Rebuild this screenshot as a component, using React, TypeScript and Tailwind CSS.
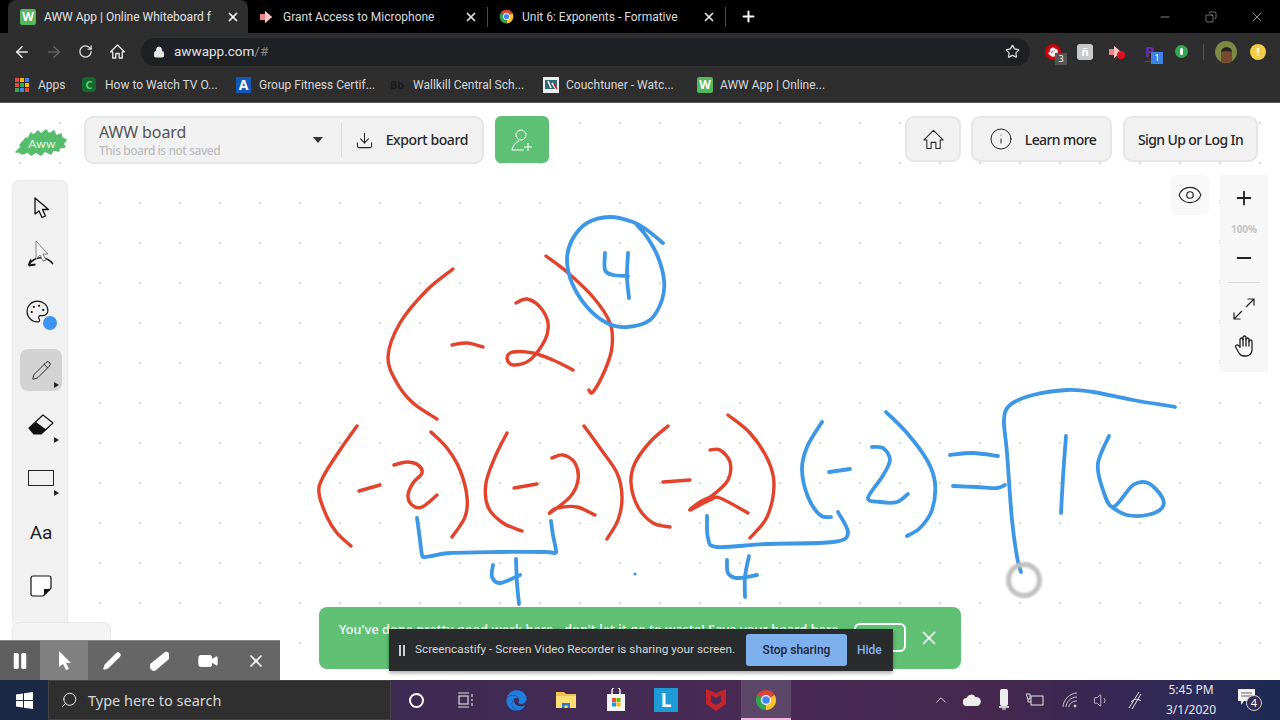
import React from "react";
import { ArrowLeft, ArrowRight, RotateCw, Lock, Star, X, Plus, Minus, Download, Info, Eye, Pencil, Search, ChevronUp, Volume1, Video, Pause, Palette, Copy, Hand } from "lucide-react";
import { TbHandStop } from "react-icons/tb";
import { FaEdge } from "react-icons/fa";

const RED = "#e2432a";
const BLUE = "#3c97e6";
type P = number[];
const redStrokes: P[] = [
  [453,269,427,290,400,323,388,357,397,383,413,403,437,419],
  [546,256,567,272,593,297,610,323,612,347,605,370,593,392,589,390],
  [452,345,467,343,483,347],
  [516,303,527,299,540,307,548,323,545,340,530,360,513,365,507,358,513,352,533,353,553,360,573,370],
  [357,426,340,450,323,477,319,493,327,517,337,533,351,546],
  [359,491,380,485],
  [394,465,407,462,418,465,422,473,413,483,408,495,412,505,422,507,437,495],
  [431,432,447,448,460,470,467,497,465,517,452,537],
  [507,433,495,457,486,483,488,507,503,523,522,531],
  [514,488,537,484],
  [552,458,563,455,575,463,578,480,570,497,550,513,557,508,577,507,595,515],
  [584,426,600,448,617,473,622,497,618,520,607,539],
  [668,426,650,442,635,463,631,483,638,507,653,523,670,527],
  [663,482,690,480],
  [710,450,720,450,730,462,728,480,713,495,700,502,690,510,710,500,720,498,748,513],
  [728,415,750,433,768,460,774,485,767,517,750,538],
];
const blueStrokes: P[] = [
  [663,243,647,230,633,222,610,217,587,223,572,240,567,260,572,283,587,307,607,323,627,327,650,320,662,300,664,280,658,257,647,237,637,225],
  [605,253,605,270,613,275,628,276],
  [628,253,627,277,629,298],
  [417,518,420,540,422,555,424,557,432,556,450,553,500,552,545,552,555,553,556,550,553,535,551,521],
  [493,565,492,577,500,583,520,575],
  [516,559,517,583,519,604],
  [707,516,708,538,717,547,767,544,833,542,848,533,838,512],
  [727,560,728,573,737,578,757,575],
  [749,556,745,577,745,597],
  [822,422,807,447,802,470,808,497,820,515,831,517],
  [829,472,850,469],
  [872,447,883,448,890,460,882,477,868,498,880,502,897,502,908,494],
  [886,412,907,433,927,460,935,483,932,510,920,528,907,536],
  [950,455,973,453,998,456],
  [953,486,977,487,997,488,1005,485],
  [1175,407,1133,400,1093,392,1067,390,1033,395,1010,405,1004,420,1007,453,1012,520,1017,557,1021,572],
  [1066,436,1063,477,1061,513],
  [1109,436,1098,463,1102,487,1113,507,1133,485,1148,483,1162,497,1162,508,1147,515,1127,515,1113,508],
];
function smooth(p: P) {
  const n = p.length / 2;
  const at = (i: number) => {
    const k = Math.max(0, Math.min(n - 1, i));
    return [p[k * 2], p[k * 2 + 1]];
  };
  let d = `M${p[0]} ${p[1]}`;
  for (let i = 0; i < n - 1; i++) {
    const [x0, y0] = at(i - 1), [x1, y1] = at(i), [x2, y2] = at(i + 1), [x3, y3] = at(i + 2);
    d += `C${(x1 + (x2 - x0) / 6).toFixed(1)} ${(y1 + (y2 - y0) / 6).toFixed(1)} ${(x2 - (x3 - x1) / 6).toFixed(1)} ${(y2 - (y3 - y1) / 6).toFixed(1)} ${x2} ${y2}`;
  }
  return d;
}

function Drawing() {
  return (
    <svg className="absolute left-0 top-0 pointer-events-none" width="1280" height="577" viewBox="0 103 1280 577" fill="none" strokeLinecap="round" strokeLinejoin="round">
      {redStrokes.map((s, i) => <path key={i} d={smooth(s)} stroke={RED} strokeWidth="3.4" />)}
      {blueStrokes.map((s, i) => <path key={i} d={smooth(s)} stroke={BLUE} strokeWidth="3.8" />)}
      <circle cx="635" cy="574" r="1.6" fill={BLUE} />
    </svg>
  );
}

function WFav() {
  return <span className="w-4 h-4 rounded-[2px] bg-[#55b85c] text-white text-[12px] font-bold leading-4 text-center shrink-0">W</span>;
}
function ArrowFav({ dot }: { dot?: boolean }) {
  return (
    <svg width="18" height="16" viewBox="0 0 18 16">
      <path d="M1 5h5V2l7 6-7 6v-3H1z" fill="#f0828a" />
      <path d="M6 2l7 6-7 6z" fill="#ffc7c7" />
      {dot && <circle cx="13" cy="11" r="4" fill="#e01020" />}
    </svg>
  );
}
function ChromeIcon({ s = 24 }: { s?: number }) {
  return (
    <svg width={s} height={s} viewBox="0 0 24 24">
      <path d="M12 12L2.500 6.500A11 11 0 0 1 21.500 6.500Z" fill="#dc4437" />
      <path d="M12 12L21.500 6.500A11 11 0 0 1 12 23Z" fill="#fbc02d" />
      <path d="M12 12L12 23A11 11 0 0 1 2.500 6.500Z" fill="#31a652" />
      <circle cx="12" cy="12" r="5.500" fill="#fff" />
      <circle cx="12" cy="12" r="4.200" fill="#4285f4" />
    </svg>
  );
}

function Tab({ w, gap, icon, title, divider }: { w: string; gap: string; icon: React.ReactNode; title: string; divider?: boolean }) {
  return (
    <div className={`${w} h-[33px] flex items-center shrink-0 relative`}>
      <span className={`${gap} ml-[11px] flex items-center`}>{icon}</span>
      <span className="flex-1 text-[12px] text-[#dcdcdc] whitespace-nowrap overflow-hidden font-['Roboto',sans-serif]">{title}</span>
      <X size={14} strokeWidth={3} className="text-[#e4e4e4] mr-[9px] ml-[6px] shrink-0" />
      {divider && <span className="w-px h-[20px] bg-[#4a4a4a]" />}
    </div>
  );
}

function TabStrip() {
  return (
    <div className="h-[33px] bg-black flex items-center shrink-0 pl-[8px]">
      <div className="w-[240px] h-[33px] bg-[#2e2e2e] rounded-t-[8px] flex items-center pl-[12px] pr-[8px] shrink-0">
        <WFav />
        <span className="ml-[8px] flex-1 text-[12px] text-[#e2e2e2] whitespace-nowrap font-['Roboto',sans-serif]">AWW App | Online Whiteboard f</span>
        <X size={14} strokeWidth={3} className="text-white ml-[4px] shrink-0" />
      </div>
      <Tab w="w-[240px]" gap="w-[24px]" icon={<ArrowFav />} title="Grant Access to Microphone" divider />
      <Tab w="w-[238px]" gap="w-[23px]" icon={<ChromeIcon s={15} />} title="Unit 6: Exponents - Formative" divider />
      <Plus size={17} strokeWidth={2.800} className="text-white ml-[14px]" />
      <div className="flex-1" />
      <Minus size={14} strokeWidth={1} className="text-[#ddd] mr-[33px]" />
      <Copy size={12} strokeWidth={1} className="text-[#ddd] mr-[32px] -scale-x-100" />
      <X size={16} strokeWidth={1} className="text-[#ddd] mr-[15px]" />
    </div>
  );
}

function HouseIcon({ size, stroke, width }: { size: number; stroke: string; width: number }) {
  return (
    <svg width={size} height={size} viewBox="0 0 22 22" fill="none" stroke={stroke} strokeWidth={width} strokeLinejoin="round">
      <path d="M11 1.500 L1 11.500 L4 11.500 L4 20.500 L8.500 20.500 L8.500 14 L13.500 14 L13.500 20.500 L18 20.500 L18 11.500 L21 11.500 Z" />
    </svg>
  );
}

function Toolbar() {
  return (
    <div className="h-[37px] bg-[#2e2e2e] flex items-center shrink-0">
      <ArrowLeft size={18} strokeWidth={2} className="text-[#e6e6e6] ml-[13px]" />
      <ArrowRight size={18} strokeWidth={2} className="text-[#666] ml-[14px]" />
      <RotateCw size={15} strokeWidth={2} className="text-[#e6e6e6] ml-[15px]" />
      <span className="ml-[17px] flex"><HouseIcon size={15} stroke="#e6e6e6" width={2} /></span>
      <div className="ml-[16px] w-[889px] h-[28px] rounded-full bg-[#1f2023] flex items-center pl-[12px] pr-[10px]">
        <Lock size={12} fill="#e6e6e6" strokeWidth={2} className="text-[#e6e6e6]" />
        <span className="ml-[9px] text-[13.500px] text-[#e2e2e2] font-['Roboto',sans-serif]">awwapp.com<span className="text-[#888]">/#</span></span>
        <div className="flex-1" />
        <Star size={15} strokeWidth={2} className="text-[#dcdcdc]" />
      </div>
      <div className="relative ml-[15px] w-[16px] h-[16px] rounded-full bg-[#c8101a] border-2 border-[#c00] flex items-center justify-center">
        <Hand size={10} fill="#fff" className="text-white" />
        <span className="absolute left-[8px] top-[7px] w-[12px] h-[12px] bg-[#555] text-white text-[9px] leading-3 text-center">3</span>
      </div>
      <div className="ml-[16px] w-[16px] h-[16px] rounded-[3px] bg-[#c9c9c9] text-white text-[11px] font-bold leading-4 text-center">ñ</div>
      <div className="ml-[15px] flex"><ArrowFav dot /></div>
      <div className="relative ml-[19px] w-[16px] h-[17px] text-[#6b2ea8] text-[15px] font-bold leading-4">
        <span className="border-b border-[#6b2ea8]">P</span>
        <span className="absolute left-[6px] top-[9px] w-[12px] h-[12px] bg-[#3d83e6] text-white text-[9px] leading-3 text-center font-normal">1</span>
      </div>
      <div className="ml-[14px] w-[13px] h-[13px] rounded-full bg-[#35a853] flex items-center justify-center"><span className="w-[3px] h-[7px] bg-white rounded-full" /></div>
      <span className="ml-[15px] w-px h-[16px] bg-[#555]" />
      <div className="ml-[11px] w-[22px] h-[22px] rounded-full bg-[#7d8a45] flex items-end justify-center overflow-hidden">
        <span className="w-[11px] h-[16px] rounded-t-full bg-[#7a4a30] border-t-[4px] border-[#222]" />
      </div>
      <div className="ml-[13px] w-[16px] h-[16px] rounded-full bg-[#f4cd47] text-white text-[11px] font-bold leading-4 text-center">!</div>
    </div>
  );
}

function Bookmark({ w, icon, text }: { w: string; icon: React.ReactNode; text: string }) {
  return (
    <div className={`${w} flex items-center shrink-0`}>
      <span className="w-[23px] flex items-center">{icon}</span>
      <span className="text-[12px] text-[#d8d8d8] whitespace-nowrap font-['Roboto',sans-serif]">{text}</span>
    </div>
  );
}

function Bookmarks() {
  const colors = ["#e8453c","#f4b400","#4285f4","#e8453c","#34a853","#f4b400","#34a853","#4285f4","#e8453c"];
  return (
    <div className="h-[33px] bg-[#2e2e2e] border-b border-[#555] flex items-center pl-[15px] pb-[3px] shrink-0">
      <Bookmark w="w-[67px]" text="Apps" icon={
        <span className="grid grid-cols-3 gap-[1px] w-[14px]">{colors.map((c, i) => <span key={i} className="w-[4px] h-[4px]" style={{ background: c }} />)}</span>
      } />
      <Bookmark w="w-[154px]" text="How to Watch TV O..." icon={
        <span className="w-[14px] h-[15px] bg-[#14692f] text-[#5fd06f] text-[11px] font-bold leading-[15px] text-center rounded-[4px]">C</span>
      } />
      <Bookmark w="w-[154px]" text="Group Fitness Certif..." icon={
        <span className="w-[15px] h-[16px] bg-[#1258b8] text-white text-[14px] font-bold leading-4 text-center">A</span>
      } />
      <Bookmark w="w-[153px]" text="Wallkill Central Sch..." icon={
        <span className="text-[11px] font-bold text-[#1b1b1b] leading-4">Bb</span>
      } />
      <Bookmark w="w-[154px]" text="Couchtuner - Watc..." icon={
        <svg width="16" height="16" viewBox="0 0 16 16"><rect width="16" height="16" fill="#eee" /><rect x="2" y="3" width="12" height="9" fill="#2c6a74" /><path d="M5 4l3 7M9 6l4 6" stroke="#fff" strokeWidth="1.500" /><path d="M11 7l3 5" stroke="#c02a2a" strokeWidth="1.500" /></svg>
      } />
      <Bookmark w="w-[140px]" text="AWW App | Online..." icon={<WFav />} />
    </div>
  );
}

function Logo() {
  return (
    <svg width="52" height="32" viewBox="0 0 52 32" className="shrink-0">
      <path d="M1 26 L7 20 L5 19 L11 12 L13 13 L16 7 L19 9 L23 5 L26 8 L31 4 L34 8 L39 5 L41 10 L46 8 L47 12 L51 14 L48 18 L50 21 L44 22 L44 25 L38 24 L36 28 L30 25 L26 29 L21 26 L16 29 L13 26 L7 28 L4 26 Z" fill="#55bd6b" stroke="#55bd6b" strokeWidth="1.500" strokeLinejoin="round" />
      <text x="27" y="21.500" textAnchor="middle" fill="#e9f7ec" fontSize="12" fontFamily="Lato, sans-serif" letterSpacing="0.3">Aww</text>
    </svg>
  );
}

function TopBar() {
  const btn = "h-[46px] bg-[#f1f1f1] border-2 border-[#e6e6e6] rounded-[9px] flex items-center justify-center text-[14px] font-medium text-[#262626] tracking-[-0.6px]";
  return (
    <div className="h-[77px] pt-[13px] pl-[15px] pr-[22px] flex items-start shrink-0">
      <div className="mt-[10px]"><Logo /></div>
      <div className="ml-[17px] w-[400px] h-[48px] bg-[#f1f1f1] border-2 border-[#e6e6e6] rounded-[9px] flex items-center pl-[13px]">
        <div className="flex-1 flex flex-col">
          <span className="text-[16px] leading-[20px] text-[#555] tracking-[-0.1px]">AWW board</span>
          <span className="text-[12px] leading-[17px] text-[#bdbdbd] font-medium tracking-[-0.45px]">This board is not saved</span>
        </div>
        <span className="w-0 h-0 border-l-[5px] border-r-[5px] border-t-[6px] border-l-transparent border-r-transparent border-t-[#333] mr-[18px]" />
        <span className="w-px h-[34px] bg-[#dcdcdc]" />
        <Download size={19} strokeWidth={1.300} className="ml-[13px] text-[#222]" />
        <span className="ml-[12px] mr-[14px] mb-[2px] text-[14px] font-medium text-[#262626] whitespace-nowrap tracking-[-0.4px]">Export board</span>
      </div>
      <div className="ml-[11px] w-[54px] h-[47px] bg-[#5dc074] rounded-[6px] flex items-center justify-center">
        <svg width="24" height="24" viewBox="0 0 24 24" fill="none" stroke="#fff" strokeWidth="1">
          <circle cx="11" cy="7" r="5" />
          <path d="M2 22c1-5 4-8 7-9M2 22h12M18 15v8M14 19h8" />
        </svg>
      </div>
      <div className="flex-1" />
      <div className={`${btn} w-[56px]`}><HouseIcon size={21} stroke="#222" width={1.100} /></div>
      <div className={`${btn} w-[141px] ml-[10px] pl-[2px]`}>
        <Info size={24} strokeWidth={1} className="text-[#222] mr-[12px]" />Learn more
      </div>
      <div className={`${btn} w-[135px] ml-[11px]`}>Sign Up or Log In</div>
    </div>
  );
}

function Caret() {
  return <span className="absolute right-[3px] bottom-[3px] w-0 h-0 border-t-[3px] border-b-[3px] border-l-[5px] border-t-transparent border-b-transparent border-l-[#222]" />;
}

function LeftTools() {
  const item = "relative w-[42px] h-[42px] flex items-center justify-center shrink-0";
  return (
    <div className="flex flex-col items-start">
      <div className="w-[56px] h-[443px] bg-[#f1f1f1] border-x border-t border-[#e8e8e8] rounded-t-[8px] pt-[6px] pl-[2px] flex flex-col items-center">
        <div className={item}>
          <svg className="translate-x-[1px]" width="18" height="22" viewBox="0 0 18 22" fill="none" stroke="#111" strokeWidth="1.300" strokeLinejoin="round"><path d="M2 1v16l4-3 3 6.500 3.500-1.500-3-6.500h6z" /></svg>
        </div>
        <div className={`${item} mt-[6px]`}>
          <svg width="28" height="30" viewBox="0 0 28 30" fill="none" stroke="#111" strokeWidth="1.300">
            <path d="M2 24 C7 15 19 14 26 23" />
            <path d="M1.500 24.500l7-1M1.500 24.500l2.500-6" strokeWidth="1.800" />
            <path d="M9 0v18l4-4 3 6 3-1-3-6h5z" fill="#f4f4f4" stroke="#777" strokeWidth="0.900" strokeLinejoin="round" />
          </svg>
        </div>
        <div className={`${item} mt-[15px]`}>
          <Palette size={25} strokeWidth={1.100} className="text-[#111] -translate-x-[4px] -translate-y-[2px]" />
          <span className="absolute left-[23px] top-[24px] w-[14px] h-[14px] rounded-full bg-[#3c94f0]" />
        </div>
        <div className={`${item} mt-[15px] bg-[#d3d3d3] rounded-[8px]`}>
          <Pencil size={21} strokeWidth={1} className="text-[#111]" />
          <Caret />
        </div>
        <div className={`${item} mt-[13px]`}>
          <svg width="26" height="24" viewBox="0 0 26 24"><path d="M1 15 L15 2 L25 10 L13 21 H6z" fill="none" stroke="#111" strokeWidth="1.200" strokeLinejoin="round" /><path d="M1 15 L8 9 L18 16.500 L13 21 H6z" fill="#111" /></svg>
          <Caret />
        </div>
        <div className={`${item} mt-[11px]`}>
          <span className="w-[26px] h-[16px] border border-[#222]" />
          <Caret />
        </div>
        <div className={`${item} mt-[13px] text-[19px] text-[#222] font-['Roboto',sans-serif]`}>Aa</div>
        <div className={`${item} mt-[11px]`}>
          <svg width="22" height="22" viewBox="0 0 22 22"><path d="M13 21H3a2 2 0 0 1-2-2V3a2 2 0 0 1 2-2h16a2 2 0 0 1 2 2v10z" fill="#fff" stroke="#111" strokeWidth="1.200" /><path d="M21 14l-7 7v-7z" fill="#111" /></svg>
        </div>
      </div>
      <div className="w-[99px] h-[30px] -mt-[1px] bg-[#f4f4f4] border border-[#e8e8e8] rounded-t-[8px]" />
    </div>
  );
}

function RightTools() {
  return (
    <div className="flex items-start -mt-[5px]">
      <div className="w-[39px] h-[40px] bg-[#f8f8f8] rounded-[6px] flex items-center justify-center">
        <Eye size={26} strokeWidth={1.100} className="text-[#222]" />
      </div>
      <div className="ml-[11px] w-[48px] h-[197px] bg-[#f7f7f7] flex flex-col items-center pt-[12px]">
        <Plus size={22} strokeWidth={2} className="text-[#222]" />
        <span className="mt-[13px] text-[10px] leading-[14px] font-bold text-[#c4c4c4]">100%</span>
        <Minus size={22} strokeWidth={2} className="mt-[11px] text-[#222]" />
        <span className="mt-[13px] w-[32px] h-px bg-[#dadada]" />
        <svg className="mt-[14px]" width="24" height="24" viewBox="0 0 24 24" fill="none" stroke="#222" strokeWidth="1.200">
          <path d="M14 10l8-8M15.500 2H22v6.500M10 14l-8 8M2 15.500V22h6.500" />
        </svg>
        <TbHandStop size={24} strokeWidth={1.300} className="mt-[13px] text-[#222]" />
      </div>
    </div>
  );
}

function Banner() {
  return (
    <div className="absolute left-[319px] top-[504px] w-[642px] h-[62px] bg-[#60c174] rounded-[8px] flex items-start pl-[20px] pt-[14px] text-white">
      <span className="text-[12.500px] font-medium whitespace-nowrap tracking-[0.14px]">You've done pretty good work here - don't let it go to waste! Save your board here</span>
      <span className="absolute left-[535px] top-[16px] w-[52px] h-[29px] border-2 border-white rounded-[6px]" />
      <X size={22} strokeWidth={1.800} className="absolute left-[599px] top-[20px]" />
    </div>
  );
}

function SharingBar() {
  return (
    <div className="absolute left-[389px] top-[526px] w-[504px] h-[42px] bg-[#292b2d] shadow-[0_2px_4px_rgba(0,0,0,0.35)] flex items-center pl-[10px] text-[12px] text-[#d6d8da] font-['Roboto',sans-serif]">
      <span className="w-[2px] h-[11px] bg-[#cfcfcf]" />
      <span className="w-[2px] h-[11px] bg-[#cfcfcf] ml-[2px]" />
      <span className="ml-[10px] whitespace-nowrap text-[11.800px]">Screencastify - Screen Video Recorder is sharing your screen.</span>
      <span className="absolute left-[357px] top-[5px] w-[101px] h-[32px] bg-[#7fb0ee] rounded-[3px] text-[#1d2530] font-medium flex items-center justify-center">Stop sharing</span>
      <span className="absolute left-[468px] top-[5px] h-[32px] flex items-center text-[#86b3ef] font-medium">Hide</span>
    </div>
  );
}

function RecorderPanel() {
  const cell = "w-[48px] h-[40px] flex items-center justify-center";
  return (
    <div className="absolute left-0 top-[537px] w-[280px] h-[40px] bg-[#666] border-t border-[#888] flex text-white">
      <div className="w-[40px] h-[40px] bg-[#5f5f5f] flex items-center justify-center"><Pause size={20} fill="#fff" strokeWidth={1} /></div>
      <div className={`${cell} bg-[#808080]`}>
        <svg width="14" height="20" viewBox="0 0 14 20" fill="#fff"><path d="M2 0v16l4-3 3 6 3-1-3-6h5z" /></svg>
      </div>
      <div className={cell}><Pencil size={20} fill="#fff" strokeWidth={1} /></div>
      <div className={cell}>
        <svg width="22" height="22" viewBox="0 0 22 22" fill="#fff"><path d="M1 14 L16 2 Q20 1 20 5 L20 9 L6 21 Q2 21 1 18z" /></svg>
      </div>
      <div className={cell}><Video size={22} fill="#fff" strokeWidth={1} /></div>
      <div className={cell}><X size={20} strokeWidth={2} /></div>
    </div>
  );
}

function Canvas() {
  return (
    <div className="relative h-[577px] bg-white overflow-hidden shrink-0 bg-[radial-gradient(circle,#d6d6d6_1px,transparent_1.500px)] bg-[length:40px_40px] flex flex-col">
      <Drawing />
      <div className="absolute left-[1006px] top-[459px] w-[36px] h-[36px] rounded-full border-[5px] border-[#c0c0c0] blur-[1px]" />
      <div className="relative flex flex-col flex-1">
        <TopBar />
        <div className="px-[12px] flex justify-between items-start">
          <LeftTools />
          <RightTools />
        </div>
      </div>
      <Banner />
      <SharingBar />
      <RecorderPanel />
    </div>
  );
}

function Taskbar() {
  const slot = "w-[50px] h-[40px] flex items-center justify-center shrink-0";
  return (
    <div className="h-[40px] bg-[linear-gradient(90deg,#3c2a54_0%,#3d2a52_30%,#4a2a55_60%,#45274f_78%,#2b2a58_94%,#1c2a52_100%)] flex items-center shrink-0">
      <div className="w-[48px] h-[40px] bg-[#1a2844] flex items-center justify-center">
        <svg width="17" height="17" viewBox="0 0 17 17" fill="#fff"><path d="M0 2.500l7-1v6.500H0zM8 1.300l9-1.300v8H8zM0 9h7v6.500l-7-1zM8 9h9v8l-9-1.300z" /></svg>
      </div>
      <div className="w-[343px] h-[40px] bg-[#2f2f2f] border border-[#444] flex items-center pl-[11px]">
        <Search size={18} strokeWidth={1.300} className="text-[#eee] -scale-x-100" />
        <span className="ml-[10px] text-[14.500px] text-[#d8d8d8] mt-[2px]">Type here to search</span>
      </div>
      <div className="w-[1px]" />
      <div className={`${slot} -ml-[1px]`}><span className="w-[15px] h-[15px] rounded-full border-2 border-white" /></div>
      <div className={slot}>
        <svg width="18" height="16" viewBox="0 0 18 16" fill="none" stroke="#ddd" strokeWidth="1.200"><path d="M1 1h11M1 15h11" /><rect x="2" y="4" width="9" height="8" /><path d="M15 2v3M15 7v2M15 11v3" /></svg>
      </div>
      <div className={slot}><FaEdge size={21} className="text-[#1d7fe0]" /></div>
      <div className={slot}>
        <svg width="22" height="20" viewBox="0 0 22 20"><path d="M1 2h8l2 2h10v14H1z" fill="#f4c24e" /><path d="M1 6h20v12H1z" fill="#ffdd77" /><path d="M7 18v-5h8v5h-2.500v-2.500h-3V18z" fill="#2a7cc7" /></svg>
      </div>
      <div className={slot}>
        <svg width="20" height="24" viewBox="0 0 20 24"><path d="M1 6h18v17H1z" fill="#f4f4f4" /><path d="M6 6V3a4 4 0 0 1 8 0v3" fill="none" stroke="#eee" strokeWidth="1.500" /><rect x="6" y="10" width="4" height="4" fill="#e8532b" /><rect x="10.500" y="10" width="4" height="4" fill="#7ab800" /><rect x="6" y="14.500" width="4" height="4" fill="#1a9ae0" /><rect x="10.500" y="14.500" width="4" height="4" fill="#f9b900" /></svg>
      </div>
      <div className={slot}><span className="w-[24px] h-[24px] bg-[#1e9bd6] text-white text-[19px] font-bold leading-6 text-center">L</span></div>
      <div className={slot}>
        <svg width="22" height="24" viewBox="0 0 22 24"><path d="M1 1l10 4 10-4v15l-10 7-10-7z" fill="#c4242a" /><path d="M6 7l5 3 5-3v7l-5 3-5-3z" fill="#4a2c5c" /></svg>
      </div>
      <div className={`${slot} bg-[#5d4768] relative`}>
        <ChromeIcon s={22} />
        <span className="absolute left-0 right-0 bottom-0 h-[2px] bg-[#f5b5e8]" />
      </div>
      <div className="flex-1" />
      <ChevronUp size={18} strokeWidth={1.200} className="text-[#e4e4e4]" />
      <svg className="ml-[13px]" width="18" height="12" viewBox="0 0 18 12" fill="#eee"><path d="M4 12a4 4 0 0 1-.5-8 5 5 0 0 1 9-1 4.500 4.500 0 0 1 1.500 9z" /></svg>
      <svg className="ml-[18px]" width="10" height="24" viewBox="0 0 10 24"><rect x="1" y="1" width="8" height="17" rx="2" fill="#eee" /><rect x="0" y="18" width="10" height="2" fill="#ccc" /><rect x="3" y="20" width="4" height="2" fill="#999" /></svg>
      <svg className="ml-[17px]" width="18" height="14" viewBox="0 0 18 14" fill="none" stroke="#e8e8e8" strokeWidth="1"><rect x="5" y="3" width="12" height="9" /><path d="M0 1h4v5H2zM2 6v3h3" /></svg>
      <svg className="ml-[18px]" width="16" height="16" viewBox="0 0 16 16" fill="none" stroke="#cfcfcf" strokeWidth="1"><path d="M1 15C1 8 8 1 15 1M4 15c0-5 5-10 11-10M7 15c0-3 3-6 8-6" /><circle cx="13" cy="14" r="1" fill="#eee" /></svg>
      <Volume1 size={17} strokeWidth={1} className="ml-[15px] text-[#eee]" />
      <svg className="ml-[17px]" width="16" height="20" viewBox="0 0 16 20" fill="none" stroke="#e4e4e4" strokeWidth="1"><path d="M2 18 L12 2M5 19 L14 4M4 12c3-4 8-3 10-1" /></svg>
      <div className="ml-[18px] w-[60px] flex flex-col items-center text-[12px] leading-[20px] text-[#e8e8e8]">
        <span>5:45 PM</span>
        <span>3/1/2020</span>
      </div>
      <div className="relative ml-[17px] mr-[25px] w-[17px] h-[18px] -mt-[7px]">
        <svg width="17" height="18" viewBox="0 0 17 18"><path d="M0 1h17v12H6l-3 4v-4H0z" fill="#f4f4f4" /><path d="M3 5h11M3 8h11" stroke="#666" /></svg>
        <span className="absolute left-[8px] top-[7px] w-[16px] h-[16px] rounded-full bg-[#3a2c50] border border-[#ccc] text-white text-[11px] leading-[14px] text-center">4</span>
      </div>
    </div>
  );
}

export default function App() {
  return (
    <div className="w-[1280px] h-[720px] overflow-hidden flex flex-col bg-white font-['Noto_Sans',sans-serif]">
      <TabStrip />
      <Toolbar />
      <Bookmarks />
      <Canvas />
      <Taskbar />
    </div>
  );
}
